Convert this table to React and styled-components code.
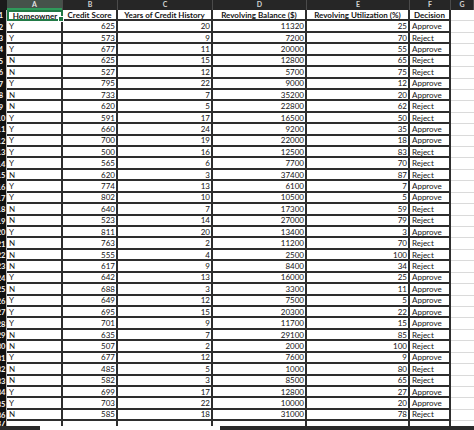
import React from "react";
import styled, { createGlobalStyle } from "styled-components";

const GlobalStyle = createGlobalStyle`
  html, body {
    margin: 0;
    padding: 0;
    background: #fff;
    overflow: hidden;
  }
  body {
    font-family: Lato, "Liberation Sans", sans-serif;
  }
`;

const ROW_H = 11.43;

const columns = [
  { letter: "A", title: "Homeowner", align: "left" },
  { letter: "B", title: "Credit Score", align: "right" },
  { letter: "C", title: "Years of Credit History", align: "right" },
  { letter: "D", title: "Revolving Balance ($)", align: "right" },
  { letter: "E", title: "Revolving Utilization (%)", align: "right" },
  { letter: "F", title: "Decision", align: "left" },
];

const rows = [
  ["Y", 625, 20, 11320, 25, "Approve"],
  ["Y", 573, 9, 7200, 70, "Reject"],
  ["Y", 677, 11, 20000, 55, "Approve"],
  ["N", 625, 15, 12800, 65, "Reject"],
  ["N", 527, 12, 5700, 75, "Reject"],
  ["Y", 795, 22, 9000, 12, "Approve"],
  ["N", 733, 7, 35200, 20, "Approve"],
  ["N", 620, 5, 22800, 62, "Reject"],
  ["Y", 591, 17, 16500, 50, "Reject"],
  ["Y", 660, 24, 9200, 35, "Approve"],
  ["Y", 700, 19, 22000, 18, "Approve"],
  ["Y", 500, 16, 12500, 83, "Reject"],
  ["Y", 565, 6, 7700, 70, "Reject"],
  ["N", 620, 3, 37400, 87, "Reject"],
  ["Y", 774, 13, 6100, 7, "Approve"],
  ["Y", 802, 10, 10500, 5, "Approve"],
  ["N", 640, 7, 17300, 59, "Reject"],
  ["N", 523, 14, 27000, 79, "Reject"],
  ["Y", 811, 20, 13400, 3, "Approve"],
  ["N", 763, 2, 11200, 70, "Reject"],
  ["N", 555, 4, 2500, 100, "Reject"],
  ["N", 617, 9, 8400, 34, "Reject"],
  ["Y", 642, 13, 16000, 25, "Approve"],
  ["N", 688, 3, 3300, 11, "Approve"],
  ["Y", 649, 12, 7500, 5, "Approve"],
  ["Y", 695, 15, 20300, 22, "Approve"],
  ["Y", 701, 9, 11700, 15, "Approve"],
  ["N", 635, 7, 29100, 85, "Reject"],
  ["N", 507, 2, 2000, 100, "Reject"],
  ["Y", 677, 12, 7600, 9, "Approve"],
  ["N", 485, 5, 1000, 80, "Reject"],
  ["N", 582, 3, 8500, 65, "Reject"],
  ["Y", 699, 17, 12800, 27, "Approve"],
  ["Y", 703, 22, 10000, 20, "Approve"],
  ["N", 585, 18, 31000, 78, "Reject"],
];

const Sheet = styled.div`
  display: grid;
  grid-template-columns: 7px 56px 55px 95px 94px 103px 41px 1fr;
  grid-template-rows: 10px repeat(36, ${ROW_H}px) 5px;
  width: 474px;
`;

const Corner = styled.div`
  background: #1b1b1b;
`;

const ColHead = styled.div`
  box-sizing: border-box;
  display: flex;
  justify-content: center;
  align-items: center;
  background: ${(p) => (p.$selected ? "#45524a" : "#262626")};
  color: ${(p) => (p.$selected ? "#e4e4e4" : "#d2d2d2")};
  border-right: 1px solid #4b4b4b;
  box-shadow: ${(p) => (p.$selected ? "inset 0 -2px 0 #2f9a5b" : "none")};
  font-size: 7px;
  font-weight: 700;
  line-height: 8px;
  padding-bottom: 2px;
`;

const RowHead = styled.div`
  display: flex;
  overflow: hidden;
  background: #111;
  color: #f2f2f2;
  font-size: 7.5px;
  font-weight: 700;
  align-items: center;
  border-right: 1px solid #bbb;
  box-sizing: border-box;
`;

const RowNum = styled.span`
  flex: 0 0 16px;
  margin-left: -7px;
  text-align: center;
`;

const Cell = styled.div`
  position: relative;
  box-sizing: border-box;
  display: flex;
  align-items: center;
  justify-content: ${(p) =>
    p.$align === "right" ? "flex-end" : p.$align === "center" ? "center" : "flex-start"};
  padding: 0 ${(p) => (p.$align === "right" ? "1px" : "2px")};
  border-right: 2px solid #2e2e2e;
  border-bottom: ${(p) => (p.$open ? "none" : "2px solid #2e2e2e")};
  font-size: 8px;
  font-weight: ${(p) => (p.$bold ? 700 : 400)};
  color: #141414;
  white-space: nowrap;
  overflow: ${(p) => (p.$active ? "visible" : "hidden")};
  ${(p) =>
    p.$active &&
    `
    border: 2px solid #217a46;
    &::after {
      content: "";
      position: absolute;
      right: -3px;
      bottom: -3px;
      width: 4px;
      height: 4px;
      background: #217a46;
      border: 1px solid #fff;
      z-index: 2;
    }
  `}
`;

const Blank = styled.div`
  border-bottom: ${(p) => (p.$open ? "none" : "1px solid #dadada")};
  box-sizing: border-box;
`;

const Footer = styled.div`
  display: flex;
  height: 8px;
`;

const TabBlock = styled.div`
  background: #2a2a2a;
  flex: ${(p) => (p.$grow ? "1" : `0 0 ${p.$w}px`)};
`;

const Gap = styled.div`
  flex: 0 0 ${(p) => p.$w}px;
`;

export default function App() {
  const lastRow = rows.length + 2;
  return (
    <>
      <GlobalStyle />
      <Sheet>
        <Corner />
        {columns.map((c) => (
          <ColHead key={c.letter} $selected={c.letter === "A"}>
            {c.letter}
          </ColHead>
        ))}
        <ColHead>G</ColHead>

        <RowHead>
          <RowNum>1</RowNum>
        </RowHead>
        {columns.map((c) => (
          <Cell key={c.letter} $align="center" $bold $active={c.letter === "A"}>
            {c.title}
          </Cell>
        ))}
        <Blank />

        {rows.map((r, i) => (
          <React.Fragment key={i}>
            <RowHead>
              <RowNum>{i + 2}</RowNum>
            </RowHead>
            {r.map((v, j) => (
              <Cell key={j} $align={columns[j].align}>
                {v}
              </Cell>
            ))}
            <Blank />
          </React.Fragment>
        ))}

        <RowHead>
          <RowNum>{lastRow}</RowNum>
        </RowHead>
        {columns.map((c) => (
          <Cell key={c.letter} $open />
        ))}
        <Blank $open />
      </Sheet>
      <Footer>
        <TabBlock $w={40} />
        <Gap $w={180} />
        <TabBlock $grow />
      </Footer>
    </>
  );
}
